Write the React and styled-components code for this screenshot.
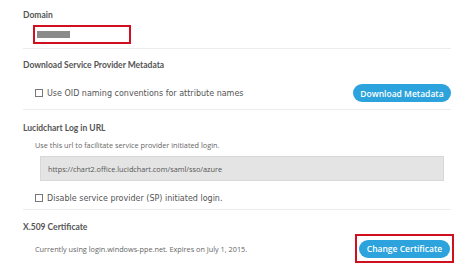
import React from 'react';
import styled, { createGlobalStyle } from 'styled-components';

const GlobalStyle = createGlobalStyle`
  html, body {
    margin: 0;
    padding: 0;
    background: #fff;
  }
  body {
    font-family: 'Open Sans', 'Liberation Sans', sans-serif;
  }
`;

const Page = styled.div`
  width: 428px;
  padding: 10px 0 0 23px;
`;

const Section = styled.section`
  display: flex;
  flex-direction: column;
  padding: ${(p) => p.$pad || '0'};
  border-bottom: ${(p) => (p.$last ? 'none' : '1px solid #ececec')};
`;

const Heading = styled.div`
  font-family: 'Lato', 'Liberation Sans', sans-serif;
  font-weight: 700;
  font-size: 8.5px;
  line-height: 10px;
  color: #555;
`;

const RedFrame = styled.div`
  display: flex;
  align-items: center;
  box-sizing: border-box;
  width: ${(p) => p.$w}px;
  height: ${(p) => p.$h}px;
  border: 2px solid #d0101f;
  padding: 0 2px;
  margin: 5px 0 0 ${(p) => p.$ml || 0}px;
`;

const Redacted = styled.div`
  width: 33px;
  height: 7px;
  background: #8a8a8a;
`;

const Row = styled.div`
  display: flex;
  align-items: center;
  justify-content: space-between;
  padding-left: 12px;
  height: ${(p) => p.$h}px;
  margin-top: ${(p) => p.$mt || 0}px;
`;

const CheckLabel = styled.label`
  display: flex;
  align-items: center;
  gap: 4px;
  font-family: 'DejaVu Sans', 'Liberation Sans', sans-serif;
  font-size: 8px;
  color: #555;
`;

const Box = styled.span`
  display: inline-block;
  box-sizing: border-box;
  width: 8px;
  height: 8px;
  border: 1px solid #777;
  background: #fff;
`;

const PillButton = styled.button`
  box-sizing: border-box;
  width: ${(p) => p.$w}px;
  height: 18px;
  border: none;
  border-radius: 9px;
  background: #2ca3dc;
  color: #fff;
  font-family: 'Open Sans', 'Liberation Sans', sans-serif;
  font-weight: 600;
  font-size: 8.5px;
  padding: 0;
`;

const Note = styled.div`
  font-family: 'Open Sans', 'Liberation Sans', sans-serif;
  font-size: 7.3px;
  color: #666;
  padding-left: ${(p) => p.$pl ?? 12}px;
  margin-top: ${(p) => p.$mt || 0}px;
`;

const UrlBox = styled.div`
  display: flex;
  align-items: center;
  box-sizing: border-box;
  width: 404px;
  height: 25px;
  margin: 6px 0 0 17px;
  padding-left: 7px;
  background: #e4e4e4;
  border: 1px solid #d8d8d8;
  font-family: 'Open Sans', 'Liberation Sans', sans-serif;
  font-size: 7.3px;
  color: #555;
`;

const RightFrame = styled.div`
  display: flex;
  align-items: center;
  justify-content: center;
  box-sizing: border-box;
  width: 99px;
  height: 29px;
  border: 2px solid #d0101f;
  margin-right: -3px;
`;

export default function App() {
  return (
    <>
      <GlobalStyle />
      <Page>
        <Section $pad="0 0 4px 0">
          <Heading>Domain</Heading>
          <RedFrame $w={98} $h={19} $ml={10}>
            <Redacted />
          </RedFrame>
        </Section>

        <Section $pad="11px 0 7px 0">
          <Heading>Download Service Provider Metadata</Heading>
          <Row $h={18} $mt={14}>
            <CheckLabel>
              <Box />
              Use OID naming conventions for attribute names
            </CheckLabel>
            <PillButton $w={98}>Download Metadata</PillButton>
          </Row>
        </Section>

        <Section $pad="13px 0 5px 0">
          <Heading>Lucidchart Log in URL</Heading>
          <Note $mt={7}>Use this url to facilitate service provider initiated login.</Note>
          <UrlBox>https://chart2.office.lucidchart.com/saml/sso/azure</UrlBox>
          <Row $h={12} $mt={11}>
            <CheckLabel>
              <Box />
              Disable service provider (SP) initiated login.
            </CheckLabel>
          </Row>
        </Section>

        <Section $pad="12px 0 0 0" $last>
          <Heading>X.509 Certificate</Heading>
          <Row $h={29} $mt={2}>
            <Note $pl={0}>Currently using login.windows-ppe.net. Expires on July 1, 2015.</Note>
            <RightFrame>
              <PillButton $w={91}>Change Certificate</PillButton>
            </RightFrame>
          </Row>
        </Section>
      </Page>
    </>
  );
}
